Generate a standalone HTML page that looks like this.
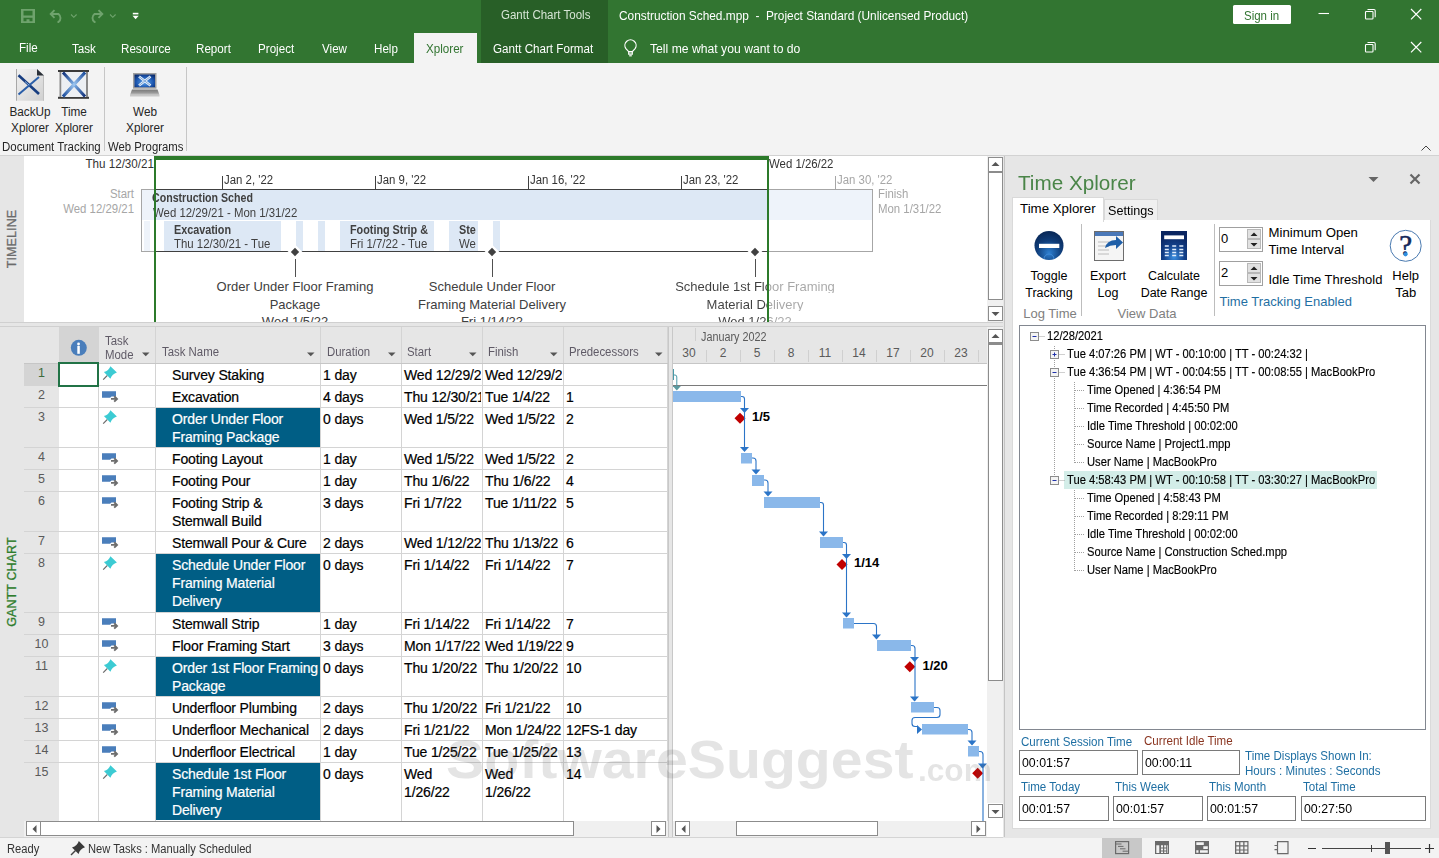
<!DOCTYPE html>
<html><head><meta charset="utf-8">
<style>
*{margin:0;padding:0;box-sizing:border-box}
html,body{width:1439px;height:858px;overflow:hidden;background:#f3f3f3;font-family:"Liberation Sans",sans-serif;color:#000}
.a{position:absolute}
.t{position:absolute;white-space:pre;line-height:1}
svg{position:absolute;overflow:visible}
#title{left:0;top:0;width:1439px;height:63px;background:#327531}
.tab{position:absolute;top:43px;font-size:12.5px;color:#fff;transform:scaleX(.93);transform-origin:0 0}
.rb{font-size:12px;color:#262626}
.tl{font-size:12px;color:#333;transform:scaleX(.95);transform-origin:0 0}
.ml{font-size:13px;color:#404040;transform:translateX(-50%)}
.hd{font-size:12px;color:#5f5a66;transform:scaleX(.95);transform-origin:0 0}
.cl{overflow:hidden}
.tx{position:absolute;top:0;font-size:14px;line-height:18px;letter-spacing:-.15px;-webkit-text-stroke:.2px currentColor;white-space:pre;color:#000}
</style></head><body>
<!-- TITLE BAR -->
<div id="title" class="a"></div>
<div class="a" style="left:481px;top:0;width:127px;height:63px;background:#285f27"></div>
<div class="a" style="left:414px;top:33px;width:63px;height:30px;background:#f3f3f3"></div>


<!-- QAT -->
<svg style="left:0;top:0" width="160" height="31">
 <path d="M21 9h14v14h-14z M23.5 10.8v4.8h9v-4.8z M23.5 17.8v3.4h3v-2h3v2h3v-3.4z" fill="#6fa36d" fill-rule="evenodd"/>
 <g fill="none" stroke="#6fa36d" stroke-width="1.9">
  <path d="M54.5 10.2l-3.8 3.8 3.8 3.8"/>
  <path d="M51 14h7.5a5 5 0 0 1 0 8h-1"/>
  <path d="M98.5 10.2l3.8 3.8-3.8 3.8"/>
  <path d="M102 14h-7.5a5 5 0 0 0 0 8h1"/>
 </g>
 <g fill="none" stroke="#6fa36d" stroke-width="1.1">
  <path d="M71 14.5l2.8 2.8 2.8-2.8"/>
  <path d="M110 14.5l2.8 2.8 2.8-2.8"/>
 </g>
 <rect x="132.8" y="12.8" width="5.6" height="1.6" fill="#fff"/>
 <path d="M132.5 15.8h6.2l-3.1 3.4z" fill="#fff"/>
</svg>
<div class="t" style="left:501px;top:9px;font-size:12px;color:#d6e5d5;transform:scaleX(.96);transform-origin:0 0">Gantt Chart Tools</div>
<div class="t" style="left:619px;top:9px;font-size:13px;color:#fff;transform:scaleX(.912);transform-origin:0 0">Construction Sched.mpp  -  Project Standard (Unlicensed Product)</div>
<div class="a" style="left:1233px;top:5px;width:58px;height:19px;background:#fff;border-radius:1.5px"></div>
<div class="t" style="left:1244px;top:10px;font-size:12.5px;color:#327531;transform:scaleX(.92);transform-origin:0 0">Sign in</div>
<svg style="left:1300px;top:0" width="139" height="63">
 <g fill="none" stroke="#fff" stroke-width="1.1">
  <path d="M18.5 13.5h10.5"/>
  <rect x="65.5" y="11.5" width="7.5" height="7.5" rx=".8"/>
  <path d="M67.5 9.5h6.5q1.2 0 1.2 1.2v6.5"/>
  <path d="M111 9l10.3 10.3 M121.3 9l-10.3 10.3" stroke-width="1.2"/>
  <rect x="65.5" y="44.5" width="7.5" height="7.5" rx=".8"/>
  <path d="M67.5 42.5h6.5q1.2 0 1.2 1.2v6.5"/>
  <path d="M111 42l10.3 10.3 M121.3 42l-10.3 10.3" stroke-width="1.2"/>
 </g>
</svg>
<!-- TABS -->
<div class="t tab" style="left:18.6px;top:42px">File</div>
<div class="t tab" style="left:72px">Task</div>
<div class="t tab" style="left:121px">Resource</div>
<div class="t tab" style="left:196px">Report</div>
<div class="t tab" style="left:258px">Project</div>
<div class="t tab" style="left:322px">View</div>
<div class="t tab" style="left:374px">Help</div>
<div class="t tab" style="left:426px;color:#327531">Xplorer</div>
<div class="t tab" style="left:493px">Gantt Chart Format</div>
<svg style="left:620px;top:36px" width="20" height="24">
 <g fill="none" stroke="#fff" stroke-width="1.2">
  <path d="M8.7 15.6L5.9 12.6A5.6 5.6 0 1 1 15.1 12.6L12.3 15.6Z"/>
  <path d="M8.7 15.6h3.6v2.5h-3.6z"/>
  <path d="M9.2 19.8h2.6"/>
 </g>
</svg>
<div class="t tab" style="left:650px;transform:scaleX(.975)">Tell me what you want to do</div>

<!-- RIBBON -->
<div class="a" style="left:0;top:155px;width:1439px;height:1px;background:#d2d2d2"></div>
<svg style="left:0;top:63px" width="200" height="92">
 <defs>
  <linearGradient id="pg" x1="0" y1="0" x2="1" y2="1"><stop offset="0" stop-color="#f0f0f0"/><stop offset=".5" stop-color="#e2e2e2"/><stop offset="1" stop-color="#cfcfcf"/></linearGradient>
  <linearGradient id="xb" x1="0" y1="0" x2="1" y2="1"><stop offset="0" stop-color="#10307a"/><stop offset=".5" stop-color="#7fb2e8"/><stop offset="1" stop-color="#10307a"/></linearGradient>
  <linearGradient id="xb2" x1="1" y1="0" x2="0" y2="1"><stop offset="0" stop-color="#1a4a9a"/><stop offset=".5" stop-color="#9cc6f0"/><stop offset="1" stop-color="#1a4a9a"/></linearGradient>
  <radialGradient id="scr" cx=".5" cy=".6" r=".7"><stop offset="0" stop-color="#5fa8f0"/><stop offset=".6" stop-color="#1c56b0"/><stop offset="1" stop-color="#0a2a6a"/></radialGradient>
  <linearGradient id="lb" x1="0" y1="0" x2="0" y2="1"><stop offset="0" stop-color="#7a7a7a"/><stop offset=".6" stop-color="#9a9a9a"/><stop offset="1" stop-color="#d0d0d0"/></linearGradient>
 </defs>
 <!-- backup -->
 <path d="M16 6h21l7 6.5v25.2h-28z" fill="url(#pg)"/>
 <path d="M16.5 6v31.7" stroke="#a8a8a8" stroke-width="1"/>
 <path d="M43.5 12.5v25.2" stroke="#c0c0c0" stroke-width="1"/>
 <path d="M37 6l7 6.5h-7z" fill="#2a3038"/>
 <path d="M18.5 12.2L39 31" stroke="#173d80" stroke-width="2.6"/>
 <path d="M39 14L18.5 31.5" stroke="#2a5ea8" stroke-width="2"/>
 <path d="M25 18.5l4 3.5" stroke="#8ab4e6" stroke-width="1"/>
 <!-- time -->
 <rect x="58" y="7" width="31" height="2" fill="#3a3a3a"/>
 <rect x="58" y="33.8" width="31" height="2" fill="#3a3a3a"/>
 <rect x="59.5" y="9" width="2" height="25" fill="#8a8a8a"/>
 <rect x="86" y="9" width="2" height="25" fill="#8a8a8a"/>
 <path d="M61.5 9h24.5v25h-24.5z" fill="#eceff3"/>
 <path d="M63 9.5l22 24 M85 9.5l-22 24" stroke="url(#xb)" stroke-width="3"/>
 <path d="M85 9.5l-22 24" stroke="url(#xb2)" stroke-width="3"/>
 <!-- web -->
 <rect x="133" y="10" width="23.5" height="15.7" fill="#a0a0a0"/>
 <rect x="134.5" y="11.5" width="20.5" height="12.7" fill="url(#scr)"/>
 <path d="M139 13.5l11.5 9 M150.5 13.5l-11.5 9" stroke="#e8f0fa" stroke-width="2.6"/>
 <path d="M139 13.5l11.5 9 M150.5 13.5l-11.5 9" stroke="#7fa8d8" stroke-width="1"/>
 <path d="M132 26.6h25.5l2 5.5h-29.5z" fill="url(#lb)"/>
 <path d="M130 32h29.5v1.5h-29.5z" fill="#c8c8c8"/>
</svg>
<div class="a" style="left:104px;top:67px;width:1px;height:84px;background:#c6c6c6"></div>
<div class="a" style="left:186px;top:67px;width:1px;height:84px;background:#c6c6c6"></div>
<div class="t rb" style="left:30px;top:106px;transform:translateX(-50%) scaleX(.98)">BackUp</div>
<div class="t rb" style="left:30px;top:122px;transform:translateX(-50%) scaleX(.98)">Xplorer</div>
<div class="t rb" style="left:74px;top:106px;transform:translateX(-50%) scaleX(.98)">Time</div>
<div class="t rb" style="left:74px;top:122px;transform:translateX(-50%) scaleX(.98)">Xplorer</div>
<div class="t rb" style="left:145px;top:106px;transform:translateX(-50%) scaleX(.98)">Web</div>
<div class="t rb" style="left:145px;top:122px;transform:translateX(-50%) scaleX(.98)">Xplorer</div>
<div class="t rb" style="left:2px;top:141px;transform:scaleX(.955);transform-origin:0 0">Document Tracking</div>
<div class="t rb" style="left:108px;top:141px;transform:scaleX(.945);transform-origin:0 0">Web Programs</div>
<svg style="left:1420px;top:144px" width="12" height="8"><path d="M1.5 6.5l4.5-4.5 4.5 4.5" fill="none" stroke="#444" stroke-width="1"/></svg>

<!-- TIMELINE -->
<div class="a" style="left:0;top:156px;width:24px;height:166px;background:#e6e6e6"></div>
<div class="t" style="left:12px;top:239px;font-size:12.5px;color:#6b6b6b;letter-spacing:.1px;-webkit-text-stroke:.3px #6b6b6b;transform:translate(-50%,-50%) rotate(-90deg)">TIMELINE</div>
<div class="a" style="left:24px;top:156px;width:964px;height:166px;background:#fff"></div>
<!-- box -->
<div class="a" style="left:141px;top:189px;width:732px;height:63px;border:1px solid #a6a6a6"></div>
<div class="a" style="left:142px;top:190px;width:626px;height:30px;background:#dde8f5"></div>
<div class="a" style="left:142px;top:190px;width:12px;height:30px;background:#eef3fa"></div>
<div class="a" style="left:769px;top:190px;width:103px;height:30px;background:#eef3fa"></div>
<div class="a" style="left:144px;top:221px;width:6px;height:30px;background:#eef3fa"></div>
<div class="a" style="left:164px;top:221px;width:117px;height:30px;background:#dde8f5"></div>
<div class="a" style="left:296px;top:221px;width:7px;height:30px;background:#dde8f5"></div>
<div class="a" style="left:318px;top:221px;width:7px;height:30px;background:#dde8f5"></div>
<div class="a" style="left:340px;top:221px;width:94px;height:30px;background:#dde8f5"></div>
<div class="a" style="left:449px;top:221px;width:29px;height:30px;background:#dde8f5"></div>
<div class="a" style="left:493px;top:221px;width:7px;height:30px;background:#dde8f5"></div>
<div class="a" style="left:154px;top:189px;width:614px;height:1px;background:#404040"></div>
<div class="a" style="left:154px;top:251px;width:614px;height:1px;background:#404040"></div>
<!-- ticks -->
<div class="a" style="left:222px;top:176px;width:1px;height:13px;background:#404040"></div>
<div class="a" style="left:375px;top:176px;width:1px;height:13px;background:#404040"></div>
<div class="a" style="left:528px;top:176px;width:1px;height:13px;background:#404040"></div>
<div class="a" style="left:681px;top:176px;width:1px;height:13px;background:#404040"></div>
<div class="a" style="left:835px;top:176px;width:1px;height:13px;background:#a6a6a6"></div>
<div class="t tl" style="left:224px;top:174px">Jan 2, '22</div>
<div class="t tl" style="left:377px;top:174px">Jan 9, '22</div>
<div class="t tl" style="left:530px;top:174px">Jan 16, '22</div>
<div class="t tl" style="left:683px;top:174px">Jan 23, '22</div>
<div class="t tl" style="left:837px;top:174px;color:#a6a6a6">Jan 30, '22</div>
<div class="t tl" style="left:154px;top:158px;transform:translateX(-100%) scaleX(.97);transform-origin:100% 0">Thu 12/30/21</div>
<div class="t tl" style="left:769px;top:158px">Wed 1/26/22</div>
<div class="t tl" style="left:134px;top:188px;color:#a6a6a6;transform:translateX(-100%) scaleX(.95);transform-origin:100% 0">Start</div>
<div class="t tl" style="left:134px;top:203px;color:#a6a6a6;transform:translateX(-100%) scaleX(.95);transform-origin:100% 0">Wed 12/29/21</div>
<div class="t tl" style="left:878px;top:188px;color:#a6a6a6">Finish</div>
<div class="t tl" style="left:878px;top:203px;color:#a6a6a6">Mon 1/31/22</div>
<div class="t" style="left:152px;top:192px;font-size:12px;font-weight:bold;color:#404040;transform:scaleX(.885);transform-origin:0 0">Construction Sched</div>
<div class="t tl" style="left:153px;top:207px;color:#404040">Wed 12/29/21 - Mon 1/31/22</div>
<div class="t" style="left:174px;top:224px;font-size:12px;font-weight:bold;color:#404040;transform:scaleX(.9);transform-origin:0 0">Excavation</div>
<div class="t tl" style="left:174px;top:238px;color:#404040">Thu 12/30/21 - Tue</div>
<div class="t" style="left:350px;top:224px;font-size:12px;font-weight:bold;color:#404040;transform:scaleX(.9);transform-origin:0 0">Footing Strip &amp;</div>
<div class="t tl" style="left:350px;top:238px;color:#404040">Fri 1/7/22 - Tue</div>
<div class="t" style="left:459px;top:224px;font-size:12px;font-weight:bold;color:#404040;transform:scaleX(.9);transform-origin:0 0">Ste</div>
<div class="t tl" style="left:459px;top:238px;color:#404040">We</div>
<div class="a" style="left:769px;top:251px;width:103px;height:1px;background:#a6a6a6"></div>
<svg style="left:0;top:0" width="1000" height="330">
 <g fill="#fff">
  <path d="M295 244.5l7.5 7.5-7.5 7.5-7.5-7.5z"/>
  <path d="M492 244.5l7.5 7.5-7.5 7.5-7.5-7.5z"/>
  <path d="M755 244.5l7.5 7.5-7.5 7.5-7.5-7.5z"/>
 </g>
 <g fill="#404040">
  <path d="M295 247.8l4.2 4.2-4.2 4.2-4.2-4.2z"/>
  <path d="M492 247.8l4.2 4.2-4.2 4.2-4.2-4.2z"/>
  <path d="M755 247.8l4.2 4.2-4.2 4.2-4.2-4.2z"/>
 </g>
 <g stroke="#505050" stroke-width="1">
  <path d="M295.5 259v18 M492.5 259v18 M755.5 259v18"/>
 </g>
</svg>
<div class="t ml" style="left:295px;top:280px">Order Under Floor Framing</div>
<div class="t ml" style="left:295px;top:298px">Package</div>
<div class="t ml" style="left:295px;top:315px">Wed 1/5/22</div>
<div class="t ml" style="left:492px;top:280px">Schedule Under Floor</div>
<div class="t ml" style="left:492px;top:298px">Framing Material Delivery</div>
<div class="t ml" style="left:492px;top:315px">Fri 1/14/22</div>
<div class="t ml" style="left:755px;top:280px;background:linear-gradient(90deg,#404040 92.8px,#a6a6a6 92.8px);-webkit-background-clip:text;color:transparent">Schedule 1st Floor Framing</div>
<div class="t ml" style="left:755px;top:298px;background:linear-gradient(90deg,#404040 61.4px,#a6a6a6 61.4px);-webkit-background-clip:text;color:transparent">Material Delivery</div>
<div class="t ml" style="left:755px;top:315px;background:linear-gradient(90deg,#404040 49.7px,#a6a6a6 49.7px);-webkit-background-clip:text;color:transparent">Wed 1/26/22</div>
<!-- green pan box -->
<div class="a" style="left:154px;top:156px;width:615px;height:4px;background:#2c7a2a"></div>
<div class="a" style="left:154px;top:156px;width:2px;height:166px;background:#2c7a2a"></div>
<div class="a" style="left:767px;top:156px;width:2px;height:166px;background:#2c7a2a"></div>
<!-- timeline scrollbar -->
<div class="a" style="left:987px;top:156px;width:16px;height:166px;background:#f0f0f0"></div>
<div class="a" style="left:988px;top:157px;width:15px;height:15px;border:1px solid #8c8c8c;background:#fff"></div>
<div class="a" style="left:988px;top:171px;width:15px;height:129px;border:1px solid #8c8c8c;border-top-width:2px;background:#fff"></div>
<div class="a" style="left:988px;top:306px;width:15px;height:15px;border:1px solid #8c8c8c;background:#fff"></div>
<svg style="left:988px;top:157px" width="15" height="165">
 <path d="M3.5 9l4-4 4 4z" fill="#555"/>
 <path d="M3.5 155l4 4 4-4z" fill="#555"/>
</svg>
<!-- TABLE -->
<div class="a" style="left:0;top:322px;width:1003px;height:5px;background:#e6e6e6"></div>
<div class="a" style="left:0;top:322px;width:1003px;height:1px;background:#d0d0d0"></div>
<div class="a" style="left:0;top:326px;width:1003px;height:1px;background:#d0d0d0"></div>
<div class="a" style="left:0;top:327px;width:24px;height:510px;background:#e6e6e6"></div>
<div class="t" style="left:12px;top:582px;font-size:12.5px;color:#2f7d2d;letter-spacing:.1px;-webkit-text-stroke:.3px #2f7d2d;transform:translate(-50%,-50%) rotate(-90deg)">GANTT CHART</div>
<div class="a" style="left:24px;top:327px;width:644px;height:494px;background:#fff"></div>
<div class="a" style="left:24px;top:327px;width:644px;height:36px;background:#e6e6e6"></div>
<div class="a" style="left:24px;top:363px;width:35px;height:458px;background:#e6e6e6"></div>
<div class="a" style="left:59px;top:327px;width:40px;height:36px;background:#d4d4d4"></div>
<div class="a" style="left:24px;top:363px;width:35px;height:22px;background:#d4d4d4"></div>
<div class="a" style="left:668px;top:327px;width:5px;height:510px;background:#e6e6e6"></div>
<div class="a" style="left:668px;top:327px;width:1px;height:510px;background:#c8c8c8"></div>
<div class="a" style="left:672px;top:327px;width:1px;height:510px;background:#c8c8c8"></div>
<div class="a" style="left:98px;top:327px;width:1px;height:494px;background:#d4d4d4"></div>
<div class="a" style="left:155px;top:327px;width:1px;height:494px;background:#d4d4d4"></div>
<div class="a" style="left:320px;top:327px;width:1px;height:494px;background:#d4d4d4"></div>
<div class="a" style="left:401px;top:327px;width:1px;height:494px;background:#d4d4d4"></div>
<div class="a" style="left:482px;top:327px;width:1px;height:494px;background:#d4d4d4"></div>
<div class="a" style="left:563px;top:327px;width:1px;height:494px;background:#d4d4d4"></div>
<div class="a" style="left:667px;top:327px;width:1px;height:494px;background:#d4d4d4"></div>
<div class="a" style="left:24px;top:363px;width:644px;height:1px;background:#c6c6c6"></div>
<div class="t hd" style="left:104.5px;top:335px">Task</div>
<div class="t hd" style="left:104.5px;top:349px">Mode</div>
<div class="t hd" style="left:162px;top:346px">Task Name</div>
<div class="t hd" style="left:326.5px;top:346px">Duration</div>
<div class="t hd" style="left:407px;top:346px">Start</div>
<div class="t hd" style="left:488px;top:346px">Finish</div>
<div class="t hd" style="left:569px;top:346px">Predecessors</div>
<div class="a" style="left:59px;top:385px;width:609px;height:1px;background:#7a7a7a"></div>
<div class="t" style="left:41.5px;top:367px;font-size:12.5px;color:#3d6b3b;transform:translateX(-50%)">1</div>
<div class="a cl" style="left:156px;top:366px;width:164px;height:19px"><div class="tx" style="left:16px;color:#000">Survey Staking</div></div>
<div class="a cl" style="left:321px;top:366px;width:80px;height:19px"><div class="tx" style="left:2px">1 day</div></div>
<div class="a cl" style="left:402px;top:366px;width:79px;height:19px"><div class="tx" style="left:2px">Wed 12/29/21</div></div>
<div class="a cl" style="left:483px;top:366px;width:79px;height:19px"><div class="tx" style="left:2px">Wed 12/29/21</div></div>
<div class="a cl" style="left:564px;top:366px;width:103px;height:19px"><div class="tx" style="left:2px"></div></div>
<div class="a" style="left:24px;top:385px;width:644px;height:1px;background:#d4d4d4"></div>
<div class="t" style="left:41.5px;top:389px;font-size:12.5px;color:#5a5a5a;transform:translateX(-50%)">2</div>
<div class="a cl" style="left:156px;top:388px;width:164px;height:19px"><div class="tx" style="left:16px;color:#000">Excavation</div></div>
<div class="a cl" style="left:321px;top:388px;width:80px;height:19px"><div class="tx" style="left:2px">4 days</div></div>
<div class="a cl" style="left:402px;top:388px;width:79px;height:19px"><div class="tx" style="left:2px">Thu 12/30/21</div></div>
<div class="a cl" style="left:483px;top:388px;width:79px;height:19px"><div class="tx" style="left:2px">Tue 1/4/22</div></div>
<div class="a cl" style="left:564px;top:388px;width:103px;height:19px"><div class="tx" style="left:2px">1</div></div>
<div class="a" style="left:24px;top:407px;width:644px;height:1px;background:#d4d4d4"></div>
<div class="a" style="left:156px;top:408px;width:164px;height:39px;background:#005e85"></div>
<div class="t" style="left:41.5px;top:411px;font-size:12.5px;color:#5a5a5a;transform:translateX(-50%)">3</div>
<div class="a cl" style="left:156px;top:410px;width:164px;height:37px"><div class="tx" style="left:16px;color:#fff">Order Under Floor<br>Framing Package</div></div>
<div class="a cl" style="left:321px;top:410px;width:80px;height:37px"><div class="tx" style="left:2px">0 days</div></div>
<div class="a cl" style="left:402px;top:410px;width:79px;height:37px"><div class="tx" style="left:2px">Wed 1/5/22</div></div>
<div class="a cl" style="left:483px;top:410px;width:79px;height:37px"><div class="tx" style="left:2px">Wed 1/5/22</div></div>
<div class="a cl" style="left:564px;top:410px;width:103px;height:37px"><div class="tx" style="left:2px">2</div></div>
<div class="a" style="left:24px;top:447px;width:644px;height:1px;background:#d4d4d4"></div>
<div class="t" style="left:41.5px;top:451px;font-size:12.5px;color:#5a5a5a;transform:translateX(-50%)">4</div>
<div class="a cl" style="left:156px;top:450px;width:164px;height:19px"><div class="tx" style="left:16px;color:#000">Footing Layout</div></div>
<div class="a cl" style="left:321px;top:450px;width:80px;height:19px"><div class="tx" style="left:2px">1 day</div></div>
<div class="a cl" style="left:402px;top:450px;width:79px;height:19px"><div class="tx" style="left:2px">Wed 1/5/22</div></div>
<div class="a cl" style="left:483px;top:450px;width:79px;height:19px"><div class="tx" style="left:2px">Wed 1/5/22</div></div>
<div class="a cl" style="left:564px;top:450px;width:103px;height:19px"><div class="tx" style="left:2px">2</div></div>
<div class="a" style="left:24px;top:469px;width:644px;height:1px;background:#d4d4d4"></div>
<div class="t" style="left:41.5px;top:473px;font-size:12.5px;color:#5a5a5a;transform:translateX(-50%)">5</div>
<div class="a cl" style="left:156px;top:472px;width:164px;height:19px"><div class="tx" style="left:16px;color:#000">Footing Pour</div></div>
<div class="a cl" style="left:321px;top:472px;width:80px;height:19px"><div class="tx" style="left:2px">1 day</div></div>
<div class="a cl" style="left:402px;top:472px;width:79px;height:19px"><div class="tx" style="left:2px">Thu 1/6/22</div></div>
<div class="a cl" style="left:483px;top:472px;width:79px;height:19px"><div class="tx" style="left:2px">Thu 1/6/22</div></div>
<div class="a cl" style="left:564px;top:472px;width:103px;height:19px"><div class="tx" style="left:2px">4</div></div>
<div class="a" style="left:24px;top:491px;width:644px;height:1px;background:#d4d4d4"></div>
<div class="t" style="left:41.5px;top:495px;font-size:12.5px;color:#5a5a5a;transform:translateX(-50%)">6</div>
<div class="a cl" style="left:156px;top:494px;width:164px;height:37px"><div class="tx" style="left:16px;color:#000">Footing Strip &amp;<br>Stemwall Build</div></div>
<div class="a cl" style="left:321px;top:494px;width:80px;height:37px"><div class="tx" style="left:2px">3 days</div></div>
<div class="a cl" style="left:402px;top:494px;width:79px;height:37px"><div class="tx" style="left:2px">Fri 1/7/22</div></div>
<div class="a cl" style="left:483px;top:494px;width:79px;height:37px"><div class="tx" style="left:2px">Tue 1/11/22</div></div>
<div class="a cl" style="left:564px;top:494px;width:103px;height:37px"><div class="tx" style="left:2px">5</div></div>
<div class="a" style="left:24px;top:531px;width:644px;height:1px;background:#d4d4d4"></div>
<div class="t" style="left:41.5px;top:535px;font-size:12.5px;color:#5a5a5a;transform:translateX(-50%)">7</div>
<div class="a cl" style="left:156px;top:534px;width:164px;height:19px"><div class="tx" style="left:16px;color:#000">Stemwall Pour &amp; Cure</div></div>
<div class="a cl" style="left:321px;top:534px;width:80px;height:19px"><div class="tx" style="left:2px">2 days</div></div>
<div class="a cl" style="left:402px;top:534px;width:79px;height:19px"><div class="tx" style="left:2px">Wed 1/12/22</div></div>
<div class="a cl" style="left:483px;top:534px;width:79px;height:19px"><div class="tx" style="left:2px">Thu 1/13/22</div></div>
<div class="a cl" style="left:564px;top:534px;width:103px;height:19px"><div class="tx" style="left:2px">6</div></div>
<div class="a" style="left:24px;top:553px;width:644px;height:1px;background:#d4d4d4"></div>
<div class="a" style="left:156px;top:554px;width:164px;height:58px;background:#005e85"></div>
<div class="t" style="left:41.5px;top:557px;font-size:12.5px;color:#5a5a5a;transform:translateX(-50%)">8</div>
<div class="a cl" style="left:156px;top:556px;width:164px;height:56px"><div class="tx" style="left:16px;color:#fff">Schedule Under Floor<br>Framing Material<br>Delivery</div></div>
<div class="a cl" style="left:321px;top:556px;width:80px;height:56px"><div class="tx" style="left:2px">0 days</div></div>
<div class="a cl" style="left:402px;top:556px;width:79px;height:56px"><div class="tx" style="left:2px">Fri 1/14/22</div></div>
<div class="a cl" style="left:483px;top:556px;width:79px;height:56px"><div class="tx" style="left:2px">Fri 1/14/22</div></div>
<div class="a cl" style="left:564px;top:556px;width:103px;height:56px"><div class="tx" style="left:2px">7</div></div>
<div class="a" style="left:24px;top:612px;width:644px;height:1px;background:#d4d4d4"></div>
<div class="t" style="left:41.5px;top:616px;font-size:12.5px;color:#5a5a5a;transform:translateX(-50%)">9</div>
<div class="a cl" style="left:156px;top:615px;width:164px;height:19px"><div class="tx" style="left:16px;color:#000">Stemwall Strip</div></div>
<div class="a cl" style="left:321px;top:615px;width:80px;height:19px"><div class="tx" style="left:2px">1 day</div></div>
<div class="a cl" style="left:402px;top:615px;width:79px;height:19px"><div class="tx" style="left:2px">Fri 1/14/22</div></div>
<div class="a cl" style="left:483px;top:615px;width:79px;height:19px"><div class="tx" style="left:2px">Fri 1/14/22</div></div>
<div class="a cl" style="left:564px;top:615px;width:103px;height:19px"><div class="tx" style="left:2px">7</div></div>
<div class="a" style="left:24px;top:634px;width:644px;height:1px;background:#d4d4d4"></div>
<div class="t" style="left:41.5px;top:638px;font-size:12.5px;color:#5a5a5a;transform:translateX(-50%)">10</div>
<div class="a cl" style="left:156px;top:637px;width:164px;height:19px"><div class="tx" style="left:16px;color:#000">Floor Framing Start</div></div>
<div class="a cl" style="left:321px;top:637px;width:80px;height:19px"><div class="tx" style="left:2px">3 days</div></div>
<div class="a cl" style="left:402px;top:637px;width:79px;height:19px"><div class="tx" style="left:2px">Mon 1/17/22</div></div>
<div class="a cl" style="left:483px;top:637px;width:79px;height:19px"><div class="tx" style="left:2px">Wed 1/19/22</div></div>
<div class="a cl" style="left:564px;top:637px;width:103px;height:19px"><div class="tx" style="left:2px">9</div></div>
<div class="a" style="left:24px;top:656px;width:644px;height:1px;background:#d4d4d4"></div>
<div class="a" style="left:156px;top:657px;width:164px;height:39px;background:#005e85"></div>
<div class="t" style="left:41.5px;top:660px;font-size:12.5px;color:#5a5a5a;transform:translateX(-50%)">11</div>
<div class="a cl" style="left:156px;top:659px;width:164px;height:37px"><div class="tx" style="left:16px;color:#fff">Order 1st Floor Framing<br>Package</div></div>
<div class="a cl" style="left:321px;top:659px;width:80px;height:37px"><div class="tx" style="left:2px">0 days</div></div>
<div class="a cl" style="left:402px;top:659px;width:79px;height:37px"><div class="tx" style="left:2px">Thu 1/20/22</div></div>
<div class="a cl" style="left:483px;top:659px;width:79px;height:37px"><div class="tx" style="left:2px">Thu 1/20/22</div></div>
<div class="a cl" style="left:564px;top:659px;width:103px;height:37px"><div class="tx" style="left:2px">10</div></div>
<div class="a" style="left:24px;top:696px;width:644px;height:1px;background:#d4d4d4"></div>
<div class="t" style="left:41.5px;top:700px;font-size:12.5px;color:#5a5a5a;transform:translateX(-50%)">12</div>
<div class="a cl" style="left:156px;top:699px;width:164px;height:19px"><div class="tx" style="left:16px;color:#000">Underfloor Plumbing</div></div>
<div class="a cl" style="left:321px;top:699px;width:80px;height:19px"><div class="tx" style="left:2px">2 days</div></div>
<div class="a cl" style="left:402px;top:699px;width:79px;height:19px"><div class="tx" style="left:2px">Thu 1/20/22</div></div>
<div class="a cl" style="left:483px;top:699px;width:79px;height:19px"><div class="tx" style="left:2px">Fri 1/21/22</div></div>
<div class="a cl" style="left:564px;top:699px;width:103px;height:19px"><div class="tx" style="left:2px">10</div></div>
<div class="a" style="left:24px;top:718px;width:644px;height:1px;background:#d4d4d4"></div>
<div class="t" style="left:41.5px;top:722px;font-size:12.5px;color:#5a5a5a;transform:translateX(-50%)">13</div>
<div class="a cl" style="left:156px;top:721px;width:164px;height:19px"><div class="tx" style="left:16px;color:#000">Underfloor Mechanical</div></div>
<div class="a cl" style="left:321px;top:721px;width:80px;height:19px"><div class="tx" style="left:2px">2 days</div></div>
<div class="a cl" style="left:402px;top:721px;width:79px;height:19px"><div class="tx" style="left:2px">Fri 1/21/22</div></div>
<div class="a cl" style="left:483px;top:721px;width:79px;height:19px"><div class="tx" style="left:2px">Mon 1/24/22</div></div>
<div class="a cl" style="left:564px;top:721px;width:103px;height:19px"><div class="tx" style="left:2px">12FS-1 day</div></div>
<div class="a" style="left:24px;top:740px;width:644px;height:1px;background:#d4d4d4"></div>
<div class="t" style="left:41.5px;top:744px;font-size:12.5px;color:#5a5a5a;transform:translateX(-50%)">14</div>
<div class="a cl" style="left:156px;top:743px;width:164px;height:19px"><div class="tx" style="left:16px;color:#000">Underfloor Electrical</div></div>
<div class="a cl" style="left:321px;top:743px;width:80px;height:19px"><div class="tx" style="left:2px">1 day</div></div>
<div class="a cl" style="left:402px;top:743px;width:79px;height:19px"><div class="tx" style="left:2px">Tue 1/25/22</div></div>
<div class="a cl" style="left:483px;top:743px;width:79px;height:19px"><div class="tx" style="left:2px">Tue 1/25/22</div></div>
<div class="a cl" style="left:564px;top:743px;width:103px;height:19px"><div class="tx" style="left:2px">13</div></div>
<div class="a" style="left:24px;top:762px;width:644px;height:1px;background:#d4d4d4"></div>
<div class="a" style="left:156px;top:763px;width:164px;height:57px;background:#005e85"></div>
<div class="t" style="left:41.5px;top:766px;font-size:12.5px;color:#5a5a5a;transform:translateX(-50%)">15</div>
<div class="a cl" style="left:156px;top:765px;width:164px;height:55px"><div class="tx" style="left:16px;color:#fff">Schedule 1st Floor<br>Framing Material<br>Delivery</div></div>
<div class="a cl" style="left:321px;top:765px;width:80px;height:55px"><div class="tx" style="left:2px">0 days</div></div>
<div class="a cl" style="left:402px;top:765px;width:79px;height:55px"><div class="tx" style="left:2px">Wed<br>1/26/22</div></div>
<div class="a cl" style="left:483px;top:765px;width:79px;height:55px"><div class="tx" style="left:2px">Wed<br>1/26/22</div></div>
<div class="a cl" style="left:564px;top:765px;width:103px;height:55px"><div class="tx" style="left:2px">14</div></div>
<div class="a" style="left:58px;top:362px;width:41px;height:25px;border:2px solid #217346"></div>
<svg style="left:0;top:0" width="1003" height="840">
<path d="M142 352.5h7.5l-3.75 3.75z" fill="#555"/>
<path d="M307 352.5h7.5l-3.75 3.75z" fill="#555"/>
<path d="M388 352.5h7.5l-3.75 3.75z" fill="#555"/>
<path d="M469 352.5h7.5l-3.75 3.75z" fill="#555"/>
<path d="M550 352.5h7.5l-3.75 3.75z" fill="#555"/>
<path d="M655 352.5h7.5l-3.75 3.75z" fill="#555"/>
<circle cx="78.8" cy="347.8" r="8" fill="#4a7ebb"/><rect x="77.3" y="345.9" width="2.5" height="7.9" fill="#fff"/><circle cx="78.55" cy="344" r="1.4" fill="#fff"/>
<g transform="translate(0,363)"><path d="M103.2 16.6l4.2-4.2" stroke="#6a6a6a" stroke-width="1.3"/><path d="M110.4 3.2L116.9 9.4Q112.2 10.8 110.4 15.8L103.9 9.1Q108.8 7.6 110.4 3.2Z" fill="#3ccbd3"/></g>
<g transform="translate(0,385)"><path d="M102 6.2h14v5.2h-4.5l-1.4 1.4h-8.1z" fill="#4a7ebb"/><path d="M111 13.9h5.5 M114.2 11.2l2.8 2.7-2.8 2.7" stroke="#6d6d6d" stroke-width="1.9" fill="none"/></g>
<g transform="translate(0,407)"><path d="M103.2 16.6l4.2-4.2" stroke="#6a6a6a" stroke-width="1.3"/><path d="M110.4 3.2L116.9 9.4Q112.2 10.8 110.4 15.8L103.9 9.1Q108.8 7.6 110.4 3.2Z" fill="#3ccbd3"/></g>
<g transform="translate(0,447)"><path d="M102 6.2h14v5.2h-4.5l-1.4 1.4h-8.1z" fill="#4a7ebb"/><path d="M111 13.9h5.5 M114.2 11.2l2.8 2.7-2.8 2.7" stroke="#6d6d6d" stroke-width="1.9" fill="none"/></g>
<g transform="translate(0,469)"><path d="M102 6.2h14v5.2h-4.5l-1.4 1.4h-8.1z" fill="#4a7ebb"/><path d="M111 13.9h5.5 M114.2 11.2l2.8 2.7-2.8 2.7" stroke="#6d6d6d" stroke-width="1.9" fill="none"/></g>
<g transform="translate(0,491)"><path d="M102 6.2h14v5.2h-4.5l-1.4 1.4h-8.1z" fill="#4a7ebb"/><path d="M111 13.9h5.5 M114.2 11.2l2.8 2.7-2.8 2.7" stroke="#6d6d6d" stroke-width="1.9" fill="none"/></g>
<g transform="translate(0,531)"><path d="M102 6.2h14v5.2h-4.5l-1.4 1.4h-8.1z" fill="#4a7ebb"/><path d="M111 13.9h5.5 M114.2 11.2l2.8 2.7-2.8 2.7" stroke="#6d6d6d" stroke-width="1.9" fill="none"/></g>
<g transform="translate(0,553)"><path d="M103.2 16.6l4.2-4.2" stroke="#6a6a6a" stroke-width="1.3"/><path d="M110.4 3.2L116.9 9.4Q112.2 10.8 110.4 15.8L103.9 9.1Q108.8 7.6 110.4 3.2Z" fill="#3ccbd3"/></g>
<g transform="translate(0,612)"><path d="M102 6.2h14v5.2h-4.5l-1.4 1.4h-8.1z" fill="#4a7ebb"/><path d="M111 13.9h5.5 M114.2 11.2l2.8 2.7-2.8 2.7" stroke="#6d6d6d" stroke-width="1.9" fill="none"/></g>
<g transform="translate(0,634)"><path d="M102 6.2h14v5.2h-4.5l-1.4 1.4h-8.1z" fill="#4a7ebb"/><path d="M111 13.9h5.5 M114.2 11.2l2.8 2.7-2.8 2.7" stroke="#6d6d6d" stroke-width="1.9" fill="none"/></g>
<g transform="translate(0,656)"><path d="M103.2 16.6l4.2-4.2" stroke="#6a6a6a" stroke-width="1.3"/><path d="M110.4 3.2L116.9 9.4Q112.2 10.8 110.4 15.8L103.9 9.1Q108.8 7.6 110.4 3.2Z" fill="#3ccbd3"/></g>
<g transform="translate(0,696)"><path d="M102 6.2h14v5.2h-4.5l-1.4 1.4h-8.1z" fill="#4a7ebb"/><path d="M111 13.9h5.5 M114.2 11.2l2.8 2.7-2.8 2.7" stroke="#6d6d6d" stroke-width="1.9" fill="none"/></g>
<g transform="translate(0,718)"><path d="M102 6.2h14v5.2h-4.5l-1.4 1.4h-8.1z" fill="#4a7ebb"/><path d="M111 13.9h5.5 M114.2 11.2l2.8 2.7-2.8 2.7" stroke="#6d6d6d" stroke-width="1.9" fill="none"/></g>
<g transform="translate(0,740)"><path d="M102 6.2h14v5.2h-4.5l-1.4 1.4h-8.1z" fill="#4a7ebb"/><path d="M111 13.9h5.5 M114.2 11.2l2.8 2.7-2.8 2.7" stroke="#6d6d6d" stroke-width="1.9" fill="none"/></g>
<g transform="translate(0,762)"><path d="M103.2 16.6l4.2-4.2" stroke="#6a6a6a" stroke-width="1.3"/><path d="M110.4 3.2L116.9 9.4Q112.2 10.8 110.4 15.8L103.9 9.1Q108.8 7.6 110.4 3.2Z" fill="#3ccbd3"/></g></svg>
<!-- CHART -->
<div class="a" style="left:673px;top:327px;width:314px;height:494px;background:#fff"></div>
<div class="a" style="left:673px;top:327px;width:314px;height:36px;background:#e6e6e6"></div>
<div class="a" style="left:673px;top:363px;width:314px;height:1px;background:#c6c6c6"></div>
<div class="a" style="left:673px;top:385px;width:314px;height:1px;background:#7a7a7a"></div>
<div class="a" style="left:695px;top:328px;width:1px;height:13px;background:#d0d0d0"></div>
<div class="t" style="left:701px;top:331px;font-size:12px;color:#5a5a5a;transform:scaleX(.9);transform-origin:0 0">January 2022</div>
<div class="a" style="left:706px;top:350px;width:1px;height:12px;background:#d0d0d0"></div>
<div class="a" style="left:740px;top:350px;width:1px;height:12px;background:#d0d0d0"></div>
<div class="a" style="left:774px;top:350px;width:1px;height:12px;background:#d0d0d0"></div>
<div class="a" style="left:808px;top:350px;width:1px;height:12px;background:#d0d0d0"></div>
<div class="a" style="left:842px;top:350px;width:1px;height:12px;background:#d0d0d0"></div>
<div class="a" style="left:876px;top:350px;width:1px;height:12px;background:#d0d0d0"></div>
<div class="a" style="left:910px;top:350px;width:1px;height:12px;background:#d0d0d0"></div>
<div class="a" style="left:944px;top:350px;width:1px;height:12px;background:#d0d0d0"></div>
<div class="a" style="left:978px;top:350px;width:1px;height:12px;background:#d0d0d0"></div>
<div class="t" style="left:689px;top:347px;font-size:12px;color:#5a5a5a;transform:translateX(-50%)">30</div>
<div class="t" style="left:723px;top:347px;font-size:12px;color:#5a5a5a;transform:translateX(-50%)">2</div>
<div class="t" style="left:757px;top:347px;font-size:12px;color:#5a5a5a;transform:translateX(-50%)">5</div>
<div class="t" style="left:791px;top:347px;font-size:12px;color:#5a5a5a;transform:translateX(-50%)">8</div>
<div class="t" style="left:825px;top:347px;font-size:12px;color:#5a5a5a;transform:translateX(-50%)">11</div>
<div class="t" style="left:859px;top:347px;font-size:12px;color:#5a5a5a;transform:translateX(-50%)">14</div>
<div class="t" style="left:893px;top:347px;font-size:12px;color:#5a5a5a;transform:translateX(-50%)">17</div>
<div class="t" style="left:927px;top:347px;font-size:12px;color:#5a5a5a;transform:translateX(-50%)">20</div>
<div class="t" style="left:961px;top:347px;font-size:12px;color:#5a5a5a;transform:translateX(-50%)">23</div>
<div class="t" style="left:752px;top:410px;font-size:13px;font-weight:bold;color:#000">1/5</div>
<div class="t" style="left:854px;top:556px;font-size:13px;font-weight:bold;color:#000">1/14</div>
<div class="t" style="left:922.5px;top:659px;font-size:13px;font-weight:bold;color:#000">1/20</div>
<svg style="left:0;top:0" width="1003" height="840"><defs><clipPath id="gc"><rect x="673" y="363" width="314" height="458"/></clipPath></defs><g clip-path="url(#gc)">
<rect x="673" y="391" width="68" height="11" fill="#8ab8ea"/>
<rect x="741" y="453" width="11" height="10.5" fill="#8ab8ea"/>
<rect x="752" y="475" width="12" height="11" fill="#8ab8ea"/>
<rect x="764" y="497" width="56" height="11" fill="#8ab8ea"/>
<rect x="820" y="537" width="23" height="11" fill="#8ab8ea"/>
<rect x="843" y="618" width="11" height="10.5" fill="#8ab8ea"/>
<rect x="877" y="640" width="34" height="11" fill="#8ab8ea"/>
<rect x="911" y="702" width="23" height="10.5" fill="#8ab8ea"/>
<rect x="922" y="724" width="46" height="10.5" fill="#8ab8ea"/>
<rect x="968" y="746" width="11" height="10.5" fill="#8ab8ea"/>
<path d="M740 412.8l5.5 5.5-5.5 5.5-5.5-5.5z" fill="#c00000"/>
<path d="M842 559.0l5.5 5.5-5.5 5.5-5.5-5.5z" fill="#c00000"/>
<path d="M909.8 661.3l5.5 5.5-5.5 5.5-5.5-5.5z" fill="#c00000"/>
<path d="M977.7 767.8l5.5 5.5-5.5 5.5-5.5-5.5z" fill="#c00000"/>
<path d="M673.5 369v11 M673.5 375h1.5q1.8 0 1.8 2v10" fill="none" stroke="#4a9aa8" stroke-width="1"/>
<path d="M672.7 386h8.2l-4.1 4.6z" fill="#5a9aa0"/>
<path d="M741 396.5h1q2.5 0 2.5 2.5v51" fill="none" stroke="#2b74c7" stroke-width="1.1"/>
<path d="M740.0 408h9l-4.5 5z" fill="#2b74c7"/>
<path d="M740.0 447h9l-4.5 5z" fill="#2b74c7"/>
<path d="M752 458h1q3 0 3 3v12" fill="none" stroke="#2b74c7" stroke-width="1.1"/>
<path d="M751.5 469.5h9l-4.5 5z" fill="#2b74c7"/>
<path d="M764 480h1q3 0 3 3v12" fill="none" stroke="#2b74c7" stroke-width="1.1"/>
<path d="M763.5 491.5h9l-4.5 5z" fill="#2b74c7"/>
<path d="M820 502.5h1q2.5 0 2.5 2.5v31" fill="none" stroke="#2b74c7" stroke-width="1.1"/>
<path d="M819.0 531.5h9l-4.5 5z" fill="#2b74c7"/>
<path d="M843 542.5h1q2.5 0 2.5 2.5v72" fill="none" stroke="#2b74c7" stroke-width="1.1"/>
<path d="M842.0 554h9l-4.5 5z" fill="#2b74c7"/>
<path d="M842.0 612.5h9l-4.5 5z" fill="#2b74c7"/>
<path d="M854 623.5h19.5q3 0 3 3v12" fill="none" stroke="#2b74c7" stroke-width="1.1"/>
<path d="M872.0 634.5h9l-4.5 5z" fill="#2b74c7"/>
<path d="M911 645.5h1q3 0 3 3v52" fill="none" stroke="#2b74c7" stroke-width="1.1"/>
<path d="M910.0 657h9l-4.5 5z" fill="#2b74c7"/>
<path d="M910.0 696.5h9l-4.5 5z" fill="#2b74c7"/>
<path d="M934 707.5h3q3 0 3 3v4q0 3-3 3h-22q-3 0-3 3v3q0 3 3 3h3" fill="none" stroke="#2b74c7" stroke-width="1.1"/>
<path d="M917 725.0v9l5-4.5z" fill="#2b74c7"/>
<path d="M968 729.5h1q3 0 3 3v12" fill="none" stroke="#2b74c7" stroke-width="1.1"/>
<path d="M967.5 740.5h9l-4.5 5z" fill="#2b74c7"/>
<path d="M979 751.5h1q3 0 3 3v70" fill="none" stroke="#2b74c7" stroke-width="1.1"/>
<path d="M978.0 763.5h9l-4.5 5z" fill="#2b74c7"/>
</g>
</svg>
<div class="a" style="left:987px;top:327px;width:16px;height:494px;background:#f0f0f0"></div>
<div class="a" style="left:988px;top:329px;width:15px;height:14px;border:1px solid #8c8c8c;background:#fff"></div>
<div class="a" style="left:988px;top:343px;width:15px;height:338px;border:1px solid #8c8c8c;border-top-width:2px;background:#fff"></div>
<div class="a" style="left:987px;top:803px;width:16px;height:34px;background:#fff"></div>
<div class="a" style="left:988px;top:804px;width:15px;height:14px;border:1px solid #8c8c8c;background:#fff"></div>
<svg style="left:988px;top:329px" width="15" height="490"><path d="M3.5 9l4-4 4 4z" fill="#555"/><path d="M3.5 481l4 4 4-4z" fill="#555"/></svg>
<div class="a" style="left:24px;top:821px;width:644px;height:16px;background:#f0f0f0"></div>
<div class="a" style="left:26px;top:821px;width:15px;height:15px;border:1px solid #8c8c8c;background:#fff"></div>
<div class="a" style="left:40px;top:821px;width:534px;height:15px;border:1px solid #8c8c8c;background:#fff"></div>
<div class="a" style="left:651px;top:821px;width:15px;height:15px;border:1px solid #8c8c8c;background:#fff"></div>
<div class="a" style="left:673px;top:821px;width:314px;height:16px;background:#f0f0f0"></div>
<div class="a" style="left:675px;top:821px;width:15px;height:15px;border:1px solid #8c8c8c;background:#fff"></div>
<div class="a" style="left:736px;top:821px;width:142px;height:15px;border:1px solid #8c8c8c;background:#fff"></div>
<div class="a" style="left:971px;top:821px;width:15px;height:15px;border:1px solid #8c8c8c;background:#fff"></div>
<svg style="left:0;top:821px" width="1003" height="16"><path d="M36.5 4v8l-4-4z M656.5 4v8l4-4z M685.5 4v8l-4-4z M976.5 4v8l4-4z" fill="#555"/></svg>
<div class="a" style="left:987px;top:821px;width:16px;height:16px;background:#fff"></div>
<div class="a" style="left:0;top:837px;width:1003px;height:1px;background:#d4d4d4"></div>
<!-- PANE -->
<div class="a" style="left:1003px;top:156px;width:436px;height:681px;background:#e6e6e6"></div>
<div class="a" style="left:1004px;top:156px;width:1px;height:681px;background:#c4c4c4"></div>
<div class="t" style="left:1018px;top:172px;font-size:21px;color:#4a8548;transform:scaleX(.985);transform-origin:0 0">Time Xplorer</div>
<svg style="left:1360px;top:170px" width="70" height="20"><path d="M8.5 7h10l-5 5z" fill="#666"/><path d="M50.5 4.5l9 9 M59.5 4.5l-9 9" stroke="#666" stroke-width="2.2"/></svg>
<div class="a" style="left:1104px;top:199px;width:54px;height:21px;background:#f0f0f0;border:1px solid #d9d9d9;border-bottom:none"></div>
<div class="a" style="left:1012px;top:197px;width:92px;height:24px;background:#fff;border:1px solid #d9d9d9;border-bottom:none"></div>
<div class="t" style="left:1020px;top:202px;font-size:13.3px;color:#000">Time Xplorer</div>
<div class="t" style="left:1108px;top:204px;font-size:13px;color:#000;transform:scaleX(.97);transform-origin:0 0">Settings</div>
<div class="a" style="left:1012px;top:220px;width:419px;height:609px;background:#fff;border:1px solid #dadada;border-top:none"></div>
<div class="a" style="left:1012px;top:197px;width:92px;height:25px;background:#fff;border:1px solid #d9d9d9;border-bottom:none"></div>
<div class="t" style="left:1020px;top:202px;font-size:13.3px;color:#000">Time Xplorer</div>
<div class="a" style="left:1081px;top:224px;width:1px;height:92px;background:#bdbdbd"></div>
<div class="a" style="left:1214px;top:224px;width:1px;height:92px;background:#bdbdbd"></div>
<div class="t" style="left:1049px;top:270px;font-size:12.5px;color:#000;transform:translateX(-50%)">Toggle</div>
<div class="t" style="left:1049px;top:287px;font-size:12.5px;color:#000;transform:translateX(-50%)">Tracking</div>
<div class="t" style="left:1108px;top:270px;font-size:12.5px;color:#000;transform:translateX(-50%)">Export</div>
<div class="t" style="left:1108px;top:287px;font-size:12.5px;color:#000;transform:translateX(-50%)">Log</div>
<div class="t" style="left:1174px;top:270px;font-size:12.5px;color:#000;transform:translateX(-50%)">Calculate</div>
<div class="t" style="left:1174px;top:287px;font-size:12.5px;color:#000;transform:translateX(-50%)">Date Range</div>
<div class="t" style="left:1050px;top:307px;font-size:13px;color:#808080;transform:translateX(-50%)">Log Time</div>
<div class="t" style="left:1147px;top:307px;font-size:13px;color:#808080;transform:translateX(-50%)">View Data</div>
<div class="t" style="left:1405.7px;top:269px;font-size:13px;color:#000;transform:translateX(-50%)">Help</div>
<div class="t" style="left:1405.7px;top:286px;font-size:13px;color:#000;transform:translateX(-50%)">Tab</div>
<div class="t" style="left:1268.5px;top:226px;font-size:13.2px;color:#000">Minimum Open</div>
<div class="t" style="left:1268.5px;top:243px;font-size:13.2px;color:#000">Time Interval</div>
<div class="t" style="left:1268.5px;top:273px;font-size:13px;color:#000">Idle Time Threshold</div>
<div class="t" style="left:1219.5px;top:294.5px;font-size:13px;color:#1f6fa3">Time Tracking Enabled</div>
<div class="a" style="left:1219px;top:227px;width:44px;height:25px;border:1px solid #a0a0a0;background:#fff"></div>
<div class="a" style="left:1247px;top:229px;width:14px;height:10px;background:#e1e1e1;border:1px solid #b8b8b8"></div>
<div class="a" style="left:1247px;top:239px;width:14px;height:10px;background:#e1e1e1;border:1px solid #b8b8b8"></div>
<svg style="left:1247px;top:229px" width="14" height="20"><path d="M3.5 7l3.5-3.5 3.5 3.5z M3.5 14l3.5 3.5 3.5-3.5z" fill="#222"/></svg>
<div class="t" style="left:1221px;top:232px;font-size:13px;color:#000">0</div>
<div class="a" style="left:1219px;top:261px;width:44px;height:25px;border:1px solid #a0a0a0;background:#fff"></div>
<div class="a" style="left:1247px;top:263px;width:14px;height:10px;background:#e1e1e1;border:1px solid #b8b8b8"></div>
<div class="a" style="left:1247px;top:273px;width:14px;height:10px;background:#e1e1e1;border:1px solid #b8b8b8"></div>
<svg style="left:1247px;top:263px" width="14" height="20"><path d="M3.5 7l3.5-3.5 3.5 3.5z M3.5 14l3.5 3.5 3.5-3.5z" fill="#222"/></svg>
<div class="t" style="left:1221px;top:266px;font-size:13px;color:#000">2</div>
<svg style="left:1000px;top:215px" width="440" height="60">
<defs>
<radialGradient id="tg" cx=".5" cy=".75" r=".7"><stop offset="0" stop-color="#2d7fd0"/><stop offset=".6" stop-color="#0f3d7a"/><stop offset="1" stop-color="#0a2a5a"/></radialGradient>
<radialGradient id="cg" cx=".5" cy=".9" r=".8"><stop offset="0" stop-color="#3a8ee0"/><stop offset=".5" stop-color="#12408a"/><stop offset="1" stop-color="#0a2560"/></radialGradient>
</defs>
<circle cx="49" cy="30.6" r="14.5" fill="url(#tg)"/>
<rect x="39" y="28.8" width="20.3" height="4.2" fill="#fff"/>
<path d="M44 44a5 5 0 0 1 10 0" stroke="#3f8ad8" stroke-width="1" fill="none"/>
<rect x="94.5" y="16.5" width="29" height="29" fill="#f5f5f5" stroke="#6d6d6d" stroke-width="1"/>
<rect x="95" y="17" width="28" height="4" fill="#4a78b8"/>
<path d="M98 27h11 M98 31h11 M98 35h11 M98 39h11" stroke="#bcbcbc" stroke-width="1"/>
<path d="M105 33q2-8 11-8v-4l7 6.5-7 6.5v-4q-6 0-11 3z" fill="#1f5fa8"/>
<rect x="161" y="16" width="26" height="29" fill="url(#cg)"/>
<rect x="164.2" y="20.4" width="19.8" height="3.8" fill="#fff"/>
<path d="M164.8 31h4 M172.2 31h4 M179.3 31h4 M164.8 34.5h4 M172.2 34.5h4 M179.3 34.5h4 M164.8 37.5h4 M172.2 37.5h4 M179.3 37.5h4 M164.8 40.5h4 M172.2 40.5h4 M179.3 40.5h4" stroke="#e0ecfa" stroke-width="1.5"/>
<circle cx="405.7" cy="30.8" r="15.5" fill="#fff" stroke="#4a7ab0" stroke-width="1"/>
<text x="405.7" y="40" font-family="Liberation Serif" font-size="29" fill="#14285a" text-anchor="middle" stroke="#14285a" stroke-width=".6">?</text>
<circle cx="405.5" cy="39.3" r="2.1" fill="#2f8fe0"/>
</svg>
<div class="a" style="left:1019px;top:325px;width:407px;height:405px;border:1px solid #828790;background:#fff"></div>
<div class="a" style="left:1064px;top:471px;width:313px;height:18px;background:#d3ede8"></div>
<div class="t" style="left:1046.5px;top:330px;font-size:12.3px;color:#000;-webkit-text-stroke:.15px #000;transform:scaleX(.91);transform-origin:0 0">12/28/2021</div>
<div class="t" style="left:1066.5px;top:348px;font-size:12.3px;color:#000;-webkit-text-stroke:.15px #000;transform:scaleX(.91);transform-origin:0 0">Tue 4:07:26 PM | WT - 00:10:00 | TT - 00:24:32 |</div>
<div class="t" style="left:1066.5px;top:366px;font-size:12.3px;color:#000;-webkit-text-stroke:.15px #000;transform:scaleX(.91);transform-origin:0 0">Tue 4:36:54 PM | WT - 00:04:55 | TT - 00:08:55 | MacBookPro</div>
<div class="t" style="left:1087px;top:384px;font-size:12.3px;color:#000;-webkit-text-stroke:.15px #000;transform:scaleX(.91);transform-origin:0 0">Time Opened | 4:36:54 PM</div>
<div class="t" style="left:1087px;top:402px;font-size:12.3px;color:#000;-webkit-text-stroke:.15px #000;transform:scaleX(.91);transform-origin:0 0">Time Recorded | 4:45:50 PM</div>
<div class="t" style="left:1087px;top:420px;font-size:12.3px;color:#000;-webkit-text-stroke:.15px #000;transform:scaleX(.91);transform-origin:0 0">Idle Time Threshold | 00:02:00</div>
<div class="t" style="left:1087px;top:438px;font-size:12.3px;color:#000;-webkit-text-stroke:.15px #000;transform:scaleX(.91);transform-origin:0 0">Source Name | Project1.mpp</div>
<div class="t" style="left:1087px;top:456px;font-size:12.3px;color:#000;-webkit-text-stroke:.15px #000;transform:scaleX(.91);transform-origin:0 0">User Name | MacBookPro</div>
<div class="t" style="left:1066.5px;top:474px;font-size:12.3px;color:#000;-webkit-text-stroke:.15px #000;transform:scaleX(.91);transform-origin:0 0">Tue 4:58:43 PM | WT - 00:10:58 | TT - 03:30:27 | MacBookPro</div>
<div class="t" style="left:1087px;top:492px;font-size:12.3px;color:#000;-webkit-text-stroke:.15px #000;transform:scaleX(.91);transform-origin:0 0">Time Opened | 4:58:43 PM</div>
<div class="t" style="left:1087px;top:510px;font-size:12.3px;color:#000;-webkit-text-stroke:.15px #000;transform:scaleX(.91);transform-origin:0 0">Time Recorded | 8:29:11 PM</div>
<div class="t" style="left:1087px;top:528px;font-size:12.3px;color:#000;-webkit-text-stroke:.15px #000;transform:scaleX(.91);transform-origin:0 0">Idle Time Threshold | 00:02:00</div>
<div class="t" style="left:1087px;top:546px;font-size:12.3px;color:#000;-webkit-text-stroke:.15px #000;transform:scaleX(.91);transform-origin:0 0">Source Name | Construction Sched.mpp</div>
<div class="t" style="left:1087px;top:564px;font-size:12.3px;color:#000;-webkit-text-stroke:.15px #000;transform:scaleX(.91);transform-origin:0 0">User Name | MacBookPro</div>
<svg style="left:0;top:0" width="1439" height="858"><g stroke="#a0a0a0" stroke-width="1" stroke-dasharray="1 1" fill="none">
<path d="M1054.5 346v135 M1074.5 382v81 M1074.5 490v81"/>
<path d="M1039.5 336.5h5"/>
<path d="M1059.5 354.5h5"/>
<path d="M1059.5 372.5h5"/>
<path d="M1075 390.5h9"/>
<path d="M1075 408.5h9"/>
<path d="M1075 426.5h9"/>
<path d="M1075 444.5h9"/>
<path d="M1075 462.5h9"/>
<path d="M1059.5 480.5h5"/>
<path d="M1075 498.5h9"/>
<path d="M1075 516.5h9"/>
<path d="M1075 534.5h9"/>
<path d="M1075 552.5h9"/>
<path d="M1075 570.5h9"/>
</g>
<rect x="1030.5" y="332.5" width="8" height="8" fill="#f4f4f4" stroke="#8c8c8c" stroke-width="1"/>
<path d="M1032.5 336.5h4" stroke="#2233aa" stroke-width="1"/>
<rect x="1050.5" y="350.5" width="8" height="8" fill="#f4f4f4" stroke="#8c8c8c" stroke-width="1"/>
<path d="M1052.5 354.5h4" stroke="#2233aa" stroke-width="1"/>
<path d="M1054.5 352.5v4" stroke="#2233aa" stroke-width="1"/>
<rect x="1050.5" y="368.5" width="8" height="8" fill="#f4f4f4" stroke="#8c8c8c" stroke-width="1"/>
<path d="M1052.5 372.5h4" stroke="#2233aa" stroke-width="1"/>
<rect x="1050.5" y="476.5" width="8" height="8" fill="#f4f4f4" stroke="#8c8c8c" stroke-width="1"/>
<path d="M1052.5 480.5h4" stroke="#2233aa" stroke-width="1"/>
</svg>
<div class="t" style="left:1020.5px;top:736px;font-size:12.3px;color:#1f6fa3;transform:scaleX(0.94);transform-origin:0 0">Current Session Time</div>
<div class="t" style="left:1144px;top:735px;font-size:12.3px;color:#8a3520;transform:scaleX(0.94);transform-origin:0 0">Current Idle Time</div>
<div class="t" style="left:1245px;top:750px;font-size:12.3px;color:#1f6fa3;transform:scaleX(0.94);transform-origin:0 0">Time Displays Shown In:</div>
<div class="t" style="left:1245px;top:765px;font-size:12.3px;color:#1f6fa3;transform:scaleX(0.94);transform-origin:0 0">Hours : Minutes : Seconds</div>
<div class="t" style="left:1020.5px;top:781px;font-size:12.3px;color:#1f6fa3;transform:scaleX(0.94);transform-origin:0 0">Time Today</div>
<div class="t" style="left:1115px;top:781px;font-size:12.3px;color:#1f6fa3;transform:scaleX(0.94);transform-origin:0 0">This Week</div>
<div class="t" style="left:1209px;top:781px;font-size:12.3px;color:#1f6fa3;transform:scaleX(0.94);transform-origin:0 0">This Month</div>
<div class="t" style="left:1303px;top:781px;font-size:12.3px;color:#1f6fa3;transform:scaleX(0.94);transform-origin:0 0">Total Time</div>
<div class="a" style="left:1019px;top:750px;width:119px;height:25px;border:1px solid #7a7a7a;background:#fff"></div>
<div class="t" style="left:1022px;top:756px;font-size:13px;color:#000;transform:scaleX(0.95);transform-origin:0 0">00:01:57</div>
<div class="a" style="left:1142px;top:750px;width:98px;height:25px;border:1px solid #7a7a7a;background:#fff"></div>
<div class="t" style="left:1145px;top:756px;font-size:13px;color:#000;transform:scaleX(0.95);transform-origin:0 0">00:00:11</div>
<div class="a" style="left:1019px;top:796px;width:90px;height:25px;border:1px solid #7a7a7a;background:#fff"></div>
<div class="t" style="left:1022px;top:802px;font-size:13px;color:#000;transform:scaleX(0.95);transform-origin:0 0">00:01:57</div>
<div class="a" style="left:1113px;top:796px;width:90px;height:25px;border:1px solid #7a7a7a;background:#fff"></div>
<div class="t" style="left:1116px;top:802px;font-size:13px;color:#000;transform:scaleX(0.95);transform-origin:0 0">00:01:57</div>
<div class="a" style="left:1207px;top:796px;width:89px;height:25px;border:1px solid #7a7a7a;background:#fff"></div>
<div class="t" style="left:1210px;top:802px;font-size:13px;color:#000;transform:scaleX(0.95);transform-origin:0 0">00:01:57</div>
<div class="a" style="left:1301px;top:796px;width:125px;height:25px;border:1px solid #7a7a7a;background:#fff"></div>
<div class="t" style="left:1304px;top:802px;font-size:13px;color:#000;transform:scaleX(0.95);transform-origin:0 0">00:27:50</div>
<!-- STATUS BAR -->
<div class="a" style="left:1003px;top:837px;width:436px;height:1px;background:#e6e6e6"></div>
<div class="a" style="left:0;top:838px;width:1439px;height:20px;background:#f3f3f3"></div>
<div class="a" style="left:1102px;top:838px;width:40px;height:20px;background:#c8c8c8"></div>
<div class="t" style="left:7px;top:843px;font-size:12px;color:#333;transform:scaleX(.93);transform-origin:0 0">Ready</div>
<div class="t" style="left:88px;top:843px;font-size:12px;color:#333;transform:scaleX(.93);transform-origin:0 0">New Tasks : Manually Scheduled</div>
<svg style="left:0;top:837px" width="1439" height="21">
 <path d="M71 18l4.5-4.5" stroke="#444" stroke-width="1.5"/>
 <path d="M78.8 4L85 10.2Q80 11.6 78.6 17L72 10.4Q77.4 9 78.8 4Z" fill="#3a3a3a"/>
 <g transform="translate(0,1)"><g fill="none" stroke="#6a6a6a" stroke-width="1.2">
  <rect x="1115.6" y="3.6" width="13" height="12"/>
  <path d="M1116 6h5.5 M1118 8.4h5.5 M1120 10.8h5.5 M1122.6 13.2h5.5" stroke-width="1"/>
  <path d="M1277.5 3.6h10.5v12h-10.5z M1274.5 7.5h3 M1274.5 11.7h3" />
 </g>
 <path d="M1155 3h14v13h-14z M1156.3 7.2v7.8h3v-7.8z M1161 7.2v2.2h2v-2.2z M1164.2 7.2v2.2h2v-2.2z M1161 10.5v2h2v-2z M1164.2 10.5v2h2v-2z M1161 13.5v1.5h2v-1.5z M1164.2 13.5v1.5h2v-1.5z M1167.2 7.2v7.8h.6v-7.8z" fill="#6a6a6a" fill-rule="evenodd"/>
 <path d="M1195 3h14v13h-14z M1196.3 4.3h7.5v2.7h-7.5z M1203.3 8.3h4.5v2.7h-4.5z M1196.3 12.3h2.2v2.5h-2.2z M1200 12.3h7.8v2.5h-7.8z" fill="#6a6a6a" fill-rule="evenodd"/>
 <path d="M1235 3h13.5v13h-13.5z M1236.3 4.3h2.8v3h-2.8z M1240.4 4.3h2.8v3h-2.8z M1244.5 4.3h2.8v3h-2.8z M1236.3 8.5h2.8v3h-2.8z M1240.4 8.5h2.8v3h-2.8z M1244.5 8.5h2.8v3h-2.8z M1236.3 12.5h2.8v2.3h-2.8z M1240.4 12.5h2.8v2.3h-2.8z M1244.5 12.5h2.8v2.3h-2.8z" fill="#6a6a6a" fill-rule="evenodd"/>
 </g>
 <path d="M1308 11.5h8 M1425 11.5h9 M1429.5 7v9" stroke="#333" stroke-width="1.2"/>
 <path d="M1322 11.5h99 M1371.5 8v7" stroke="#444" stroke-width="1"/>
 <rect x="1385" y="5" width="5" height="12" fill="#555"/>
</svg>
<!-- WATERMARK -->
<div class="t" style="left:446px;top:733px;font-size:53px;font-weight:bold;color:rgba(90,90,90,.16);transform:scaleX(1.08);transform-origin:0 0">SoftwareSuggest</div>
<div class="t" style="left:918px;top:755px;font-size:31px;font-weight:bold;color:rgba(90,90,90,.16);transform:scaleX(1.02);transform-origin:0 0">.com</div>
</body></html>
